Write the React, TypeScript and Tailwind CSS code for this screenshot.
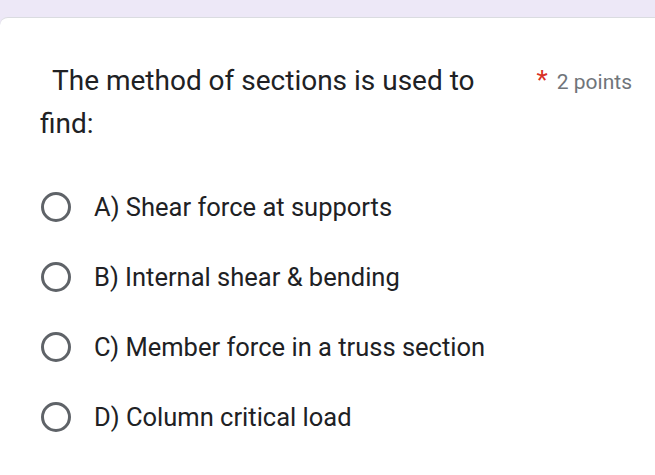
const options = [
  'A) Shear force at supports',
  'B) Internal shear & bending',
  'C) Member force in a truss section',
  'D) Column critical load',
]

function Radio() {
  return <span className="block w-[30px] h-[30px] rounded-full border-[3.5px] border-[#5f6368] shrink-0" />
}

export default function App() {
  return (
    <div className="w-[655px] h-[475px] bg-[#ede8f7] overflow-hidden font-['Roboto',sans-serif]">
      <div className="h-[17px]" />
      <div className="h-[458px] bg-white rounded-tl-[8px] border-t border-[#dadce0]">
        <div className="flex items-start justify-between pl-[40px] pr-[23px] pt-[41px]">
          <h1 className="w-[450px] text-[28px] leading-[43px] text-[#202124] indent-[12px]">
            The method of sections is used to find:
          </h1>
          <div className="flex items-start gap-[9px] pt-[2px]">
            <span className="text-[#d93025] text-[26px] leading-[26px] mt-[6px]">*</span>
            <span className="text-[#70757a] text-[21px] leading-[40px] mt-[1px]">2 points</span>
          </div>
        </div>
        <ul className="flex flex-col gap-[40px] pl-[41px] pt-[47px]">
          {options.map((o) => (
            <li key={o} className="flex items-center gap-[23px] h-[30px]">
              <Radio />
              <span className="text-[25.5px] leading-[30px] text-[#202124]">{o}</span>
            </li>
          ))}
        </ul>
      </div>
    </div>
  )
}
